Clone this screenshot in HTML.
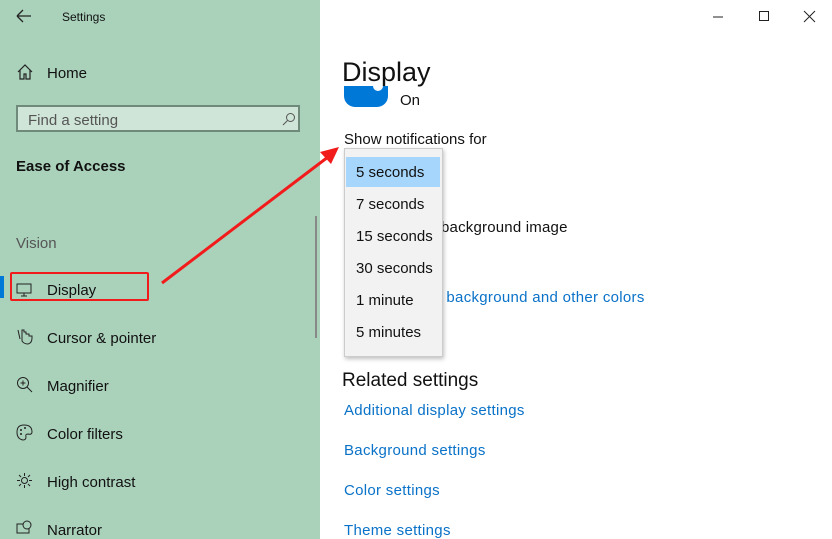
<!DOCTYPE html>
<html><head><style>
body{margin:0;width:832px;height:539px;overflow:hidden;font-family:"Liberation Sans",sans-serif;background:#fff;position:relative}
.side{position:absolute;left:0;top:0;width:320px;height:539px;background:#aad2bb}
.t{position:absolute;white-space:nowrap;color:#111}
.nav{position:absolute;left:47px;font-size:15px;color:#111;margin-top:1px}
.ic{position:absolute;left:16px}
.link{position:absolute;left:344px;font-size:15px;color:#0a72c8;white-space:nowrap;margin-top:1px;letter-spacing:0.3px}
.menu{position:absolute;left:344px;top:148px;width:97px;height:207px;background:#f2f2f2;border:1px solid #ccc;box-shadow:1px 2px 4px rgba(0,0,0,.25)}
.mi{position:absolute;left:11px;font-size:15px;color:#111}
</style></head><body>
<div class="side">
<svg class="ic" style="left:16px;top:9px" width="16" height="14"><path d="M1 7H15M1 7L7 1M1 7L7 13" stroke="#222" stroke-width="1.3" fill="none"/></svg>
<div class="t" style="left:62px;top:10px;font-size:12px">Settings</div>
<svg class="ic" style="left:17px;top:64px" width="16" height="16"><path d="M1 8L8 1L15 8M3 6V15H7V10H9V15H13V6" stroke="#222" stroke-width="1.2" fill="none"/></svg>
<div class="nav" style="top:64px;font-size:15px">Home</div>
<div style="position:absolute;left:16px;top:105px;width:284px;height:27px;border:2px solid #6f8a7a;background:#cfe5d8;box-sizing:border-box"></div>
<div class="t" style="left:28px;top:112px;font-size:15px;color:#555">Find a setting</div>
<svg class="ic" style="left:282px;top:112px" width="14" height="14"><circle cx="8.5" cy="5.5" r="4" stroke="#555" fill="none"/><path d="M5.5 8.5L1 13" stroke="#555"/></svg>
<div class="t" style="left:16px;top:158px;font-size:15px;font-weight:bold">Ease of Access</div>
<div class="t" style="left:16px;top:235px;font-size:15px;color:#555">Vision</div>
<div style="position:absolute;left:0;top:276px;width:4px;height:22px;background:#0078d7"></div>
<div style="position:absolute;left:10px;top:272px;width:139px;height:29px;border:2px solid #f21b1b;border-radius:2px;box-sizing:border-box"></div>
<svg class="ic" style="top:283px" width="16" height="14"><rect x="1" y="1" width="14" height="9" stroke="#222" fill="none"/><path d="M8 10V13M5 13H11" stroke="#222"/></svg>
<div class="nav" style="top:281px">Display</div>
<svg class="ic" style="top:329px" width="18" height="16"><path d="M2 1L4 10M6 4V12Q8 15 12 15Q16 14 16 9V7H13V5H10V3H8V1H6Z" stroke="#222" fill="none"/></svg>
<div class="nav" style="top:329px">Cursor & pointer</div>
<svg class="ic" style="top:376px" width="17" height="17"><circle cx="7" cy="7" r="5.5" stroke="#222" fill="none"/><path d="M11 11L16 16M4.5 7H9.5M7 4.5V9.5" stroke="#222"/></svg>
<div class="nav" style="top:377px">Magnifier</div>
<svg class="ic" style="top:424px" width="17" height="17"><path d="M8 1Q16 1 16 8Q16 11 12 10Q9 10 10 13Q10 16 7 16Q1 15 1 8Q1 1 8 1Z" stroke="#222" fill="none"/><circle cx="5" cy="6" r="1" fill="#222"/><circle cx="9" cy="4" r="1" fill="#222"/><circle cx="5" cy="10" r="1" fill="#222"/></svg>
<div class="nav" style="top:425px">Color filters</div>
<svg class="ic" style="top:472px" width="17" height="17"><circle cx="8.5" cy="8.5" r="3" stroke="#222" fill="none"/><path d="M8.5 1V4M8.5 13V16M1 8.5H4M13 8.5H16M3 3L5 5M12 12L14 14M3 14L5 12M12 5L14 3" stroke="#222"/></svg>
<div class="nav" style="top:473px">High contrast</div>
<svg class="ic" style="top:520px" width="17" height="17"><rect x="1" y="4" width="12" height="9" stroke="#222" fill="none"/><circle cx="11" cy="5" r="4" stroke="#222" fill="#aad2bb"/></svg>
<div class="nav" style="top:521px">Narrator</div>
<div style="position:absolute;left:315px;top:216px;width:2px;height:122px;background:#888"></div>
</div>
<svg style="position:absolute;left:706px;top:10px" width="120" height="14"><path d="M7 7H17" stroke="#222"/><rect x="53.5" y="1.5" width="9" height="9" stroke="#222" fill="none"/><path d="M98 1L109 12M109 1L98 12" stroke="#222"/></svg>
<div class="t" style="left:342px;top:57px;font-size:27px;color:#111">Display</div>
<div style="position:absolute;left:344px;top:86px;width:44px;height:21px;border-radius:0 0 11px 11px;background:#0078d7;overflow:hidden"><div style="position:absolute;left:29px;top:-5px;width:10px;height:10px;border-radius:5px;background:#fff"></div></div>
<div class="t" style="left:400px;top:92px;font-size:15px;height:15px;overflow:hidden">On</div>
<div class="t" style="left:344px;top:131px;font-size:15px">Show notifications for</div>
<div class="t" style="left:441px;top:219px;font-size:15px;letter-spacing:0.2px">background image</div>
<div class="link" style="left:428px;top:288px">ur background and other colors</div>
<div class="t" style="left:342px;top:370px;font-size:19px">Related settings</div>
<div class="link" style="top:401px">Additional display settings</div>
<div class="link" style="top:441px">Background settings</div>
<div class="link" style="top:481px">Color settings</div>
<div class="link" style="top:521px">Theme settings</div>
<div class="menu">
<div style="position:absolute;left:1px;top:8px;width:94px;height:30px;background:#a6d6fc"></div>
<div class="mi" style="top:15px">5 seconds</div>
<div class="mi" style="top:47px">7 seconds</div>
<div class="mi" style="top:79px">15 seconds</div>
<div class="mi" style="top:111px">30 seconds</div>
<div class="mi" style="top:143px">1 minute</div>
<div class="mi" style="top:175px">5 minutes</div>
</div>
<svg style="position:absolute;left:0;top:0" width="832" height="539"><path d="M162 283L328 157" stroke="#f21b1b" stroke-width="3"/><path d="M339 147L320 152L331 164Z" fill="#f21b1b"/></svg>
</body></html>
